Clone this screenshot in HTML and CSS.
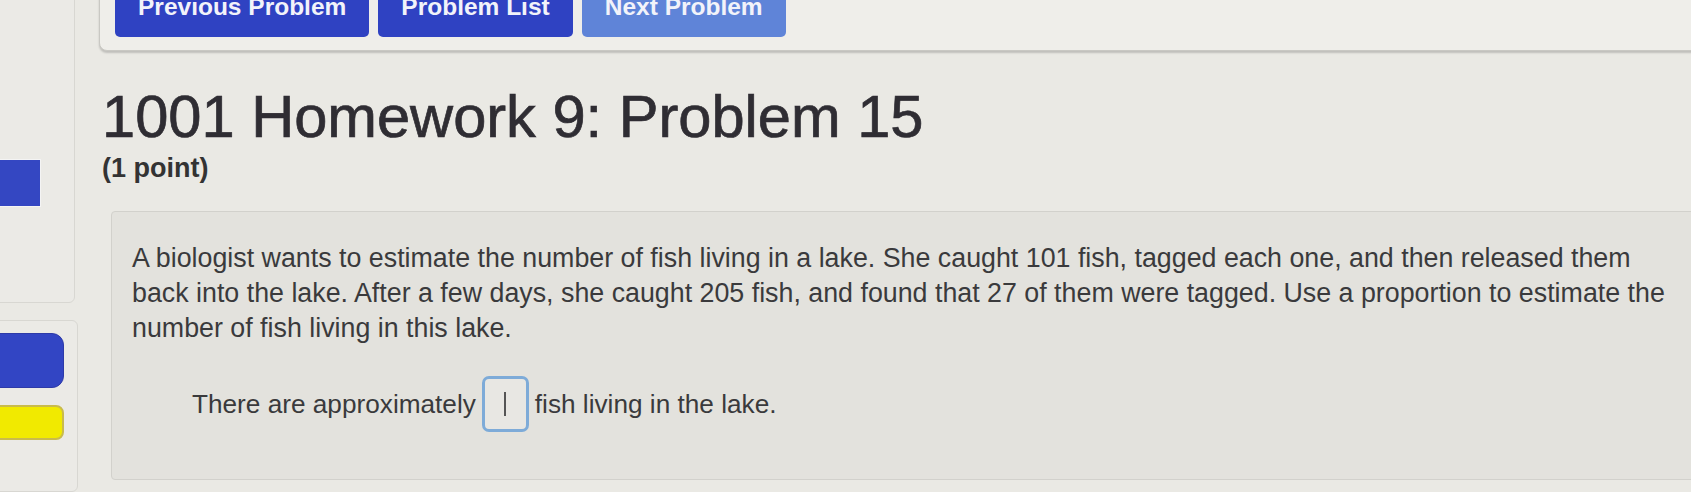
FILE: index.html
```html
<!DOCTYPE html>
<html lang="en">
<head>
<meta charset="utf-8">
<title>1001 Homework 9: Problem 15</title>
<link rel="stylesheet" href="styles.css">
</head>
<body>
<div class="page">
  <aside class="sidebar">
    <div class="side-card side-card-top">
      <div class="side-square"></div>
    </div>
    <div class="side-card side-card-bottom">
      <div class="side-btn side-btn-blue"></div>
      <div class="side-btn side-btn-yellow"></div>
    </div>
  </aside>
  <main class="main">
    <nav class="nav">
      <a class="nav-btn">Previous Problem</a>
      <a class="nav-btn">Problem List</a>
      <a class="nav-btn nav-btn-light">Next Problem</a>
    </nav>
    <h1 class="title">1001 Homework 9: Problem 15</h1>
    <div class="points">(1 point)</div>
    <section class="problem">
      <p class="question">A biologist wants to estimate the number of fish living in a lake. She caught 101 fish, tagged each one, and then released them<br>back into the lake. After a few days, she caught 205 fish, and found that 27 of them were tagged. Use a proportion to estimate the<br>number of fish living in this lake.</p>
      <div class="answer">
        <span>There are approximately</span>
        <span class="answer-box"><span class="caret"></span></span>
        <span>fish living in the lake.</span>
      </div>
    </section>
  </main>
</div>
</body>
</html>
```

FILE: styles.css
```css
html, body {
  margin: 0;
  padding: 0;
  overflow: hidden;
  background: #eae9e4;
  font-family: "Liberation Sans", Arial, sans-serif;
  color: #3a3a3c;
}

.page {
  display: flex;
  width: 1691px;
  height: 492px;
  overflow: hidden;
}

.sidebar {
  flex: 0 0 98px;
  display: flex;
  flex-direction: column;
  gap: 17px;
}

.side-card {
  background: #ebeae6;
  border: 1px solid #d8d7d2;
  border-radius: 6px;
  margin-left: -12px;
  box-sizing: border-box;
}

.side-card-top {
  margin-top: -10px;
  height: 313px;
  width: 87px;
  padding-top: 168px;
}

.side-square {
  width: 52px;
  height: 48px;
  background: #3447c2;
  border: 1px solid #f4f4f4;
  box-sizing: border-box;
}

.side-card-bottom {
  width: 90px;
  flex: 1;
  padding-top: 12px;
  display: flex;
  flex-direction: column;
  gap: 17px;
}

.side-btn {
  width: 75px;
  box-sizing: border-box;
}

.side-btn-blue {
  height: 55px;
  background: #3245c4;
  border: 1px solid #2d3aa8;
  border-radius: 0 12px 12px 0;
}

.side-btn-yellow {
  height: 35px;
  background: #f1ea00;
  border: 2px solid #c9bb4c;
  border-radius: 0 8px 8px 0;
}

.main {
  flex: 1;
  min-width: 0;
  display: flex;
  flex-direction: column;
  padding-left: 4px;
}

.nav {
  display: flex;
  gap: 9px;
  margin-top: -22px;
  margin-left: -3px;
  margin-right: -40px;
  padding: 0 0 13px 15px;
  background: #efeeea;
  border: 1px solid #c9c8c3;
  border-radius: 0 0 8px 8px;
  box-shadow: 0 2px 2px rgba(0, 0, 0, 0.18);
}

.nav-btn {
  display: block;
  height: 58px;
  box-sizing: border-box;
  padding: 0 23px;
  padding-top: 14px;
  background: #2f42c2;
  color: #f2f3fa;
  font-size: 24.5px;
  font-weight: bold;
  border-radius: 0 0 5px 5px;
  white-space: nowrap;
}

.nav-btn-light {
  background: #5f84d8;
}

.title {
  margin: 30px 0 0 0;
  font-size: 59.6px;
  font-weight: normal;
  line-height: 72px;
  color: #2f2d33;
  -webkit-text-stroke: 0.7px #2f2d33;
  white-space: nowrap;
}

.points {
  font-size: 27px;
  font-weight: bold;
  line-height: 31px;
  color: #333;
}

.problem {
  margin: 27px -40px 0 9px;
  padding: 29px 20px 47px 20px;
  background: #e3e2dd;
  border: 1px solid #d2d1cc;
  border-radius: 4px;
}

.question {
  margin: 0;
  font-size: 26.8px;
  line-height: 35px;
  white-space: nowrap;
  color: #3a3a3c;
}

.answer {
  display: flex;
  align-items: center;
  gap: 6px;
  margin-top: 30px;
  margin-left: 60px;
  font-size: 26.2px;
  color: #3a3a3c;
  white-space: nowrap;
}

.answer-box {
  width: 47px;
  height: 56px;
  box-sizing: border-box;
  border: 3px solid #7eabd8;
  border-radius: 7px;
  background: #e8e7e3;
  display: flex;
  align-items: center;
  justify-content: center;
}

.caret {
  width: 2px;
  height: 24px;
  background: #555;
}
```
